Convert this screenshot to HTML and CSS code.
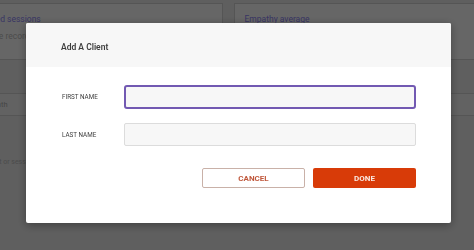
FILE: index.html
```html
<!DOCTYPE html>
<html lang="en">
<head>
  <meta charset="UTF-8">
  <meta name="viewport" content="width=device-width, initial-scale=1.0">
  <title>Add A Client</title>
  <link rel="stylesheet" href="styles.css">
</head>
<body>

  <!-- Dashboard behind the modal -->
  <div class="page">
    <div class="stats">
      <div class="stat-card">
        <div class="stat-title">Recorded sessions</div>
        <div class="stat-text">You have recorded 12 sessions</div>
      </div>
      <div class="stat-card">
        <div class="stat-title">Empathy average</div>
        <div class="stat-text">78%</div>
      </div>
    </div>
    <div class="table">
      <div class="table-head">Month</div>
      <div class="table-empty">Select a client or session</div>
    </div>
  </div>

  <!-- Add client modal -->
  <div class="overlay">
    <div class="modal">
      <div class="modal-header">Add A Client</div>
      <div class="modal-body">
        <div class="field">
          <label for="firstName">First Name</label>
          <input type="text" id="firstName" class="focused">
        </div>
        <div class="field">
          <label for="lastName">Last Name</label>
          <input type="text" id="lastName" class="short">
        </div>
        <div class="actions">
          <button class="btn btn-cancel">Cancel</button>
          <button class="btn btn-done">Done</button>
        </div>
      </div>
    </div>
  </div>

</body>
</html>
```

FILE: styles.css
```css
body {
  margin: 0;
  font-family: Roboto, "Liberation Sans", sans-serif;
  background-color: #e6e6e6;
  overflow: hidden;
}

/* Page behind */
.page {
  width: 540px;
  margin-left: -42px;
  padding-top: 3px;
}

.stats {
  display: grid;
  grid-template-columns: 1fr 1fr;
  gap: 11px;
}

.stat-card {
  box-sizing: border-box;
  height: 57px;
  padding: 9px 10px;
  background-color: #f8f8f8;
  border: 1px solid #cfcfcf;
}

.stat-title {
  font-size: 8.5px;
  line-height: 12px;
  color: #8a82f0;
}

.stat-text {
  margin-top: 5px;
  font-size: 8.5px;
  line-height: 12px;
  color: #b8b8b8;
}

.table {
  margin-top: 33px;
}

.table-head {
  box-sizing: border-box;
  height: 23px;
  padding-left: 28px;
  line-height: 21px;
  font-size: 7.5px;
  color: #aaa;
  border-top: 1px solid #cfcfcf;
  border-bottom: 1px solid #cfcfcf;
  background-color: #eeeeee;
}

.table-empty {
  padding: 42px 0 0 0;
  font-size: 7px;
  color: #b8b8b8;
}

/* Modal */
.overlay {
  position: fixed;
  top: 0;
  left: 0;
  width: 100%;
  height: 100%;
  background-color: rgba(0, 0, 0, 0.59);
  display: flex;
  align-items: flex-start;
  padding: 23px 0 0 26px;
  box-sizing: border-box;
}

.modal {
  width: 425px;
  background-color: white;
  border-radius: 2px;
  box-shadow: 0 2px 10px rgba(0, 0, 0, 0.35);
  overflow: hidden;
}

.modal-header {
  box-sizing: border-box;
  height: 44px;
  padding: 3px 0 0 35px;
  display: flex;
  align-items: center;
  background-color: #f7f7f7;
  font-size: 8.5px;
  font-weight: 600;
  color: #3c3c3c;
}

.modal-body {
  padding: 18px 35px 35px 36px;
}

.field {
  display: flex;
  align-items: center;
}

.field + .field {
  margin-top: 14px;
}

.field label {
  width: 62px;
  font-size: 6.3px;
  text-transform: uppercase;
  color: #3c3c3c;
}

.field input {
  flex: 1;
  box-sizing: border-box;
  height: 24px;
  margin: 0;
  background-color: #f7f7f7;
  border: 1px solid #dcdcdc;
  border-radius: 2px;
  outline: none;
}

.field input.short {
  height: 23px;
}

.field input.focused {
  border: 2px solid #7259b2;
  border-radius: 3px;
}

.actions {
  display: flex;
  justify-content: flex-end;
  gap: 8px;
  margin-top: 22px;
}

.btn {
  width: 103px;
  height: 20px;
  padding: 0;
  font-family: Roboto, "Liberation Sans", sans-serif;
  font-size: 8px;
  font-weight: bold;
  text-transform: uppercase;
  border-radius: 2px;
  cursor: pointer;
}

.btn-cancel {
  background-color: white;
  color: #c0583c;
  border: 1px solid #c9b1a8;
}

.btn-done {
  background-color: #d83b08;
  color: #fbe9e1;
  border: none;
}
```
